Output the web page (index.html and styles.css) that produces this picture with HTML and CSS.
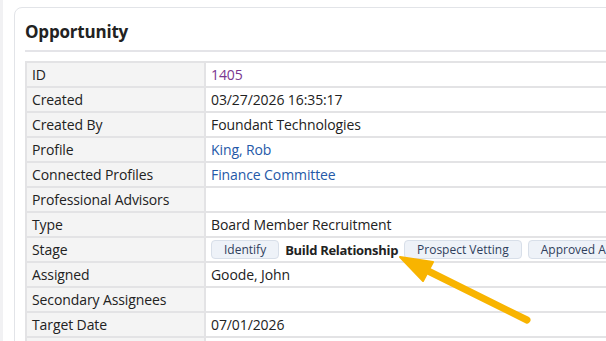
FILE: index.html
```html
<!DOCTYPE html>
<html lang="en">
<head>
    <meta charset="UTF-8">
    <meta name="viewport" content="width=device-width, initial-scale=1.0">
    <title>Opportunity</title>
    <link rel="stylesheet" href="styles.css">
</head>
<body>
    <div class="page">
        <section class="card">
            <h2 class="card-title">Opportunity</h2>
            <table class="details">
                <tr><th>ID</th><td><a href="#" class="visited">1405</a></td></tr>
                <tr><th>Created</th><td>03/27/2026 16:35:17</td></tr>
                <tr><th>Created By</th><td>Foundant Technologies</td></tr>
                <tr><th>Profile</th><td><a href="#">King, Rob</a></td></tr>
                <tr><th>Connected Profiles</th><td><a href="#">Finance Committee</a></td></tr>
                <tr><th>Professional Advisors</th><td></td></tr>
                <tr><th>Type</th><td>Board Member Recruitment</td></tr>
                <tr>
                    <th>Stage</th>
                    <td>
                        <div class="stages">
                            <button class="stage">Identify</button>
                            <span class="stage-current">Build Relationship</span>
                            <button class="stage">Prospect Vetting</button>
                            <button class="stage">Approved Appointment</button>
                        </div>
                    </td>
                </tr>
                <tr><th>Assigned</th><td>Goode, John</td></tr>
                <tr><th>Secondary Assignees</th><td></td></tr>
                <tr><th>Target Date</th><td>07/01/2026</td></tr>
                <tr><th>&nbsp;</th><td></td></tr>
            </table>
        </section>
    </div>

    <!-- annotation arrow -->
    <svg class="callout" width="606" height="341" viewBox="0 0 606 341">
        <line x1="527" y1="320" x2="418" y2="266" stroke="#f8b400" stroke-width="7" stroke-linecap="round"/>
        <polygon points="400,257 433,262 423,281" fill="#f8b400" stroke="#f8b400" stroke-width="2" stroke-linejoin="round"/>
    </svg>
</body>
</html>
```

FILE: styles.css
```css
* {
    box-sizing: border-box;
}

html, body {
    margin: 0;
    padding: 0;
    overflow: hidden;
    background: #fff;
}

body {
    font-family: 'Open Sans', sans-serif;
    color: #222;
    position: relative;
    width: 606px;
    height: 341px;
}

.page {
    border-left: 3px solid #f1f1f3;
    padding: 7px 0 0 11px;
    width: 900px;
}

.card {
    border: 1px solid #e2e4e8;
    border-radius: 8px;
    padding: 7px 10px 10px;
    width: 760px;
}

.card-title {
    margin: 0;
    padding: 5px 0 7px;
    font-size: 17px;
    letter-spacing: -0.2px;
    font-weight: 700;
    color: #222;
    border-bottom: 2px solid #e4e4e8;
    margin-bottom: 9px;
}

.details {
    border-collapse: collapse;
    width: 100%;
    font-size: 14px;
    letter-spacing: -0.1px;
}

.details th,
.details td {
    border: 1px solid #e3e3e5;
    border-width: 2px 2px 0 2px;
    height: 25px;
    padding: 0 5px;
    text-align: left;
    vertical-align: middle;
    white-space: nowrap;
}

.details th {
    width: 179px;
    background: #f4f4f4;
    font-weight: 400;
}

.details a {
    color: #2559a8;
    text-decoration: none;
}

.details a.visited {
    color: #7a3690;
}

.stages {
    display: flex;
    align-items: center;
    gap: 6px;
}

.stage {
    font-family: inherit;
    font-size: 12px;
    letter-spacing: 0;
    color: #2f3e5c;
    background: #eef2f8;
    border: 1px solid #d8dfe9;
    border-radius: 4px;
    height: 19px;
    padding: 0 12px;
}

.stage-current {
    font-weight: 700;
    font-size: 13px;
    letter-spacing: -0.3px;
    color: #222;
}

.callout {
    position: absolute;
    left: 0;
    top: 0;
    pointer-events: none;
}
```
